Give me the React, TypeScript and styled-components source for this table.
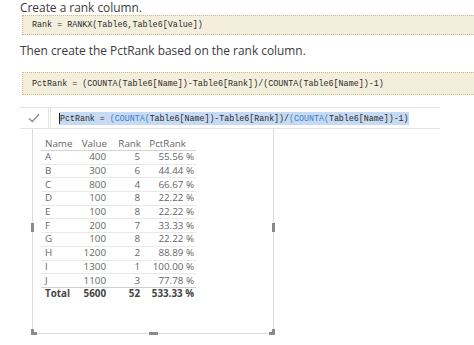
import React from "react";
import styled, { createGlobalStyle } from "styled-components";

const GlobalStyle = createGlobalStyle`
  html, body {
    margin: 0;
    padding: 0;
    background: #ffffff;
    overflow: hidden;
  }
`;

const Page = styled.div`
  width: 474px;
  height: 345px;
  padding-left: 20px;
  box-sizing: border-box;
  font-family: "Open Sans", "Noto Sans", sans-serif;
  overflow: hidden;
`;

const Para = styled.p<{ $top: number }>`
  margin: ${(p) => p.$top}px 0 0 0;
  font-size: 11.9px;
  line-height: 14px;
  color: #3b3b3b;
  white-space: nowrap;
`;

const CodeBox = styled.div<{ $top: number; $h: number }>`
  margin: ${(p) => p.$top}px 0 0 2px;
  height: ${(p) => p.$h}px;
  width: 480px;
  box-sizing: border-box;
  display: flex;
  align-items: center;
  padding-left: 9px;
  background: #f4efdc;
  border: 1px dotted #c9bb8c;
  border-right: none;
  font-family: "Liberation Mono", "DejaVu Sans Mono", monospace;
  font-size: 8.4px;
  color: #2a2a2a;
  white-space: nowrap;
`;

const FormulaBar = styled.div`
  margin-top: 12px;
  width: 420px;
  height: 20px;
  display: flex;
  border-top: 1px solid #e3e3e3;
  border-bottom: 1px solid #e3e3e3;
`;

const CheckCell = styled.div`
  width: 28px;
  display: flex;
  align-items: center;
  justify-content: center;
  border-right: 1px solid #e6e6e6;
  margin-right: 1px;
`;

const FormulaInput = styled.div`
  flex: 1;
  display: flex;
  align-items: center;
  padding-left: 8px;
  border-left: 1px solid #e3e3e3;
  font-family: "Liberation Mono", "DejaVu Sans Mono", monospace;
  font-size: 8.3px;
  color: #2a2a2a;
  white-space: nowrap;
`;

const Selection = styled.span`
  position: relative;
  background: #c6dbf3;
  padding: 2px 0 2px 1px;
`;

const Caret = styled.span`
  position: absolute;
  left: 0;
  top: 1px;
  bottom: 1px;
  width: 1px;
  background: #222;
`;

const Fn = styled.span`
  color: #3d7cc9;
`;

const Pane = styled.div`
  position: relative;
  margin-left: 12px;
  width: 242px;
  height: 205px;
  box-sizing: border-box;
  border-left: 1px solid #dcdcdc;
  border-right: 1px solid #dcdcdc;
  border-bottom: 1px solid #dcdcdc;
  padding: 8px 0 0 8px;
`;

const Handle = styled.span<{ $v?: boolean }>`
  position: absolute;
  background: #8a8a8a;
  width: ${(p) => (p.$v ? 3 : 9)}px;
  height: ${(p) => (p.$v ? 9 : 3)}px;
`;

const Corner = styled.span<{ $right?: boolean }>`
  position: absolute;
  bottom: -2px;
  ${(p) => (p.$right ? "right: -2px;" : "left: -2px;")}
  width: 6px;
  height: 6px;
  border-bottom: 3px solid #8a8a8a;
  ${(p) => (p.$right ? "border-right: 3px solid #8a8a8a;" : "border-left: 3px solid #8a8a8a;")}
  box-sizing: border-box;
`;

const Table = styled.table`
  border-collapse: collapse;
  table-layout: fixed;
  width: 155px;
  font-family: "Open Sans", "Noto Sans", sans-serif;
  font-size: 9.8px;
  color: #666;
`;

const Th = styled.th<{ $right?: boolean; $pr?: number }>`
  font-weight: normal;
  text-align: ${(p) => (p.$right ? "right" : "left")};
  padding: 0 ${(p) => p.$pr ?? 1}px 0 ${(p) => (p.$right ? 0 : 4)}px;
  height: 13px;
  line-height: 12px;
  border-bottom: 1px solid #d3d3d3;
  white-space: nowrap;
`;

const Td = styled.td<{ $right?: boolean; $total?: boolean }>`
  text-align: ${(p) => (p.$right ? "right" : "left")};
  padding: 0 ${(p) => (p.$right ? 2 : 0)}px 0 ${(p) => (p.$right ? 0 : 4)}px;
  height: 12.7px;
  line-height: 12px;
  border-top: 1px solid ${(p) => (p.$total ? "#cfcfcf" : "#e9e9e9")};
  font-weight: ${(p) => (p.$total ? 700 : 400)};
  color: ${(p) => (p.$total ? "#444" : "#666")};
  white-space: nowrap;
`;

const rows: [string, string, string, string][] = [
  ["A", "400", "5", "55.56 %"],
  ["B", "300", "6", "44.44 %"],
  ["C", "800", "4", "66.67 %"],
  ["D", "100", "8", "22.22 %"],
  ["E", "100", "8", "22.22 %"],
  ["F", "200", "7", "33.33 %"],
  ["G", "100", "8", "22.22 %"],
  ["H", "1200", "2", "88.89 %"],
  ["I", "1300", "1", "100.00 %"],
  ["J", "1100", "3", "77.78 %"],
];

export default function App() {
  return (
    <>
      <GlobalStyle />
      <Page>
        <Para $top={0}>Create a rank column.</Para>
        <CodeBox $top={1} $h={20}>Rank = RANKX(Table6,Table6[Value])</CodeBox>
        <Para $top={8}>Then create the PctRank based on the rank column.</Para>
        <CodeBox $top={15} $h={23}>
          PctRank = (COUNTA(Table6[Name])-Table6[Rank])/(COUNTA(Table6[Name])-1)
        </CodeBox>
        <FormulaBar>
          <CheckCell>
            <svg width="12" height="10" viewBox="0 0 12 10">
              <path d="M1 5.5 L4.3 8.5 L11 1.2" fill="none" stroke="#8c8c8c" strokeWidth="1.3" />
            </svg>
          </CheckCell>
          <FormulaInput>
            <Selection>
              <Caret />
              PctRank = <Fn>(COUNTA(</Fn>Table6[Name])-Table6[Rank])/<Fn>(COUNTA(</Fn>Table6[Name])-1)
            </Selection>
          </FormulaInput>
        </FormulaBar>
        <Pane>
          <Table>
            <colgroup>
              <col style={{ width: 39 }} />
              <col style={{ width: 28 }} />
              <col style={{ width: 34 }} />
              <col style={{ width: 54 }} />
            </colgroup>
            <thead>
              <tr>
                <Th>Name</Th>
                <Th $right>Value</Th>
                <Th $right>Rank</Th>
                <Th $right $pr={10}>PctRank</Th>
              </tr>
            </thead>
            <tbody>
              {rows.map((r) => (
                <tr key={r[0]}>
                  <Td>{r[0]}</Td>
                  <Td $right>{r[1]}</Td>
                  <Td $right>{r[2]}</Td>
                  <Td $right>{r[3]}</Td>
                </tr>
              ))}
              <tr>
                <Td $total>Total</Td>
                <Td $total $right>5600</Td>
                <Td $total $right>52</Td>
                <Td $total $right>533.33 %</Td>
              </tr>
            </tbody>
          </Table>
          <Handle $v style={{ left: -2, top: 94 }} />
          <Handle $v style={{ right: -2, top: 94 }} />
          <Handle style={{ left: 116, bottom: -2 }} />
          <Corner />
          <Corner $right />
        </Pane>
      </Page>
    </>
  );
}
